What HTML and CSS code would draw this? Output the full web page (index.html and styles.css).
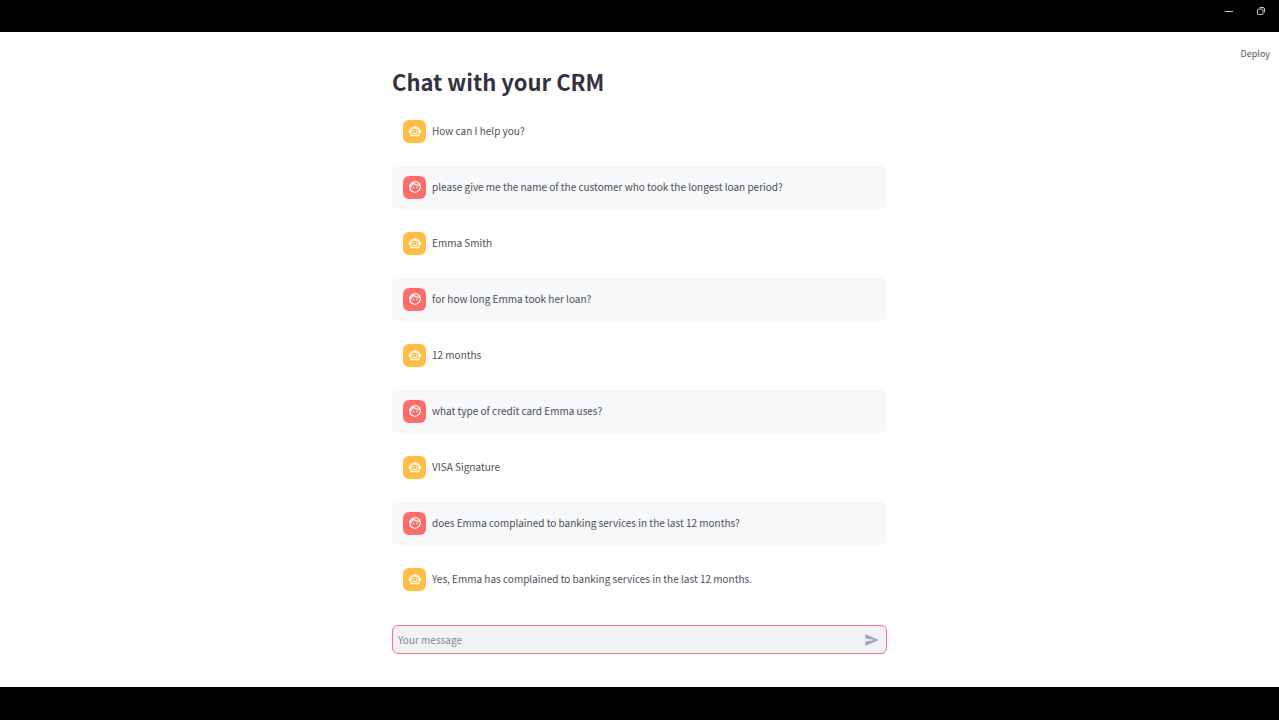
FILE: index.html
```html
<!DOCTYPE html>
<html lang="en">
<head>
    <meta charset="UTF-8">
    <meta name="viewport" content="width=device-width, initial-scale=1.0">
    <title>Chat with your CRM</title>
    <link rel="stylesheet" href="styles.css">
</head>
<body>
    <!-- Shared icons -->
    <svg class="sprite" aria-hidden="true">
        <symbol id="icon-bot" viewBox="0 0 24 24">
            <path d="M20 10V8c0-1.1-.9-2-2-2h-3.200c0-1.5-1.300-2.500-2.800-2.500S9.200 4.500 9.200 6H6c-1.100 0-2 .9-2 2v2c-1.660 0-3 1.100-3 2.700s1.340 2.700 3 2.700V19c0 1.100.9 2 2 2h12c1.100 0 2-.9 2-2v-3.600c1.660 0 3-1.100 3-2.700S21.660 10 20 10zm-2 9H6V8h12v11zm-9-5.500c-.83 0-1.500-.67-1.500-1.500S8.170 10.500 9 10.500s1.500.67 1.500 1.500S9.830 13.500 9 13.500zm7.500-1.500c0 .83-.67 1.500-1.500 1.500s-1.500-.67-1.500-1.500.67-1.500 1.500-1.500 1.500.67 1.500 1.500zM8 15.500h8v2H8v-2z"/>
        </symbol>
        <symbol id="icon-face" viewBox="0 0 24 24">
            <path d="M10.25 13c0 .69-.56 1.25-1.25 1.25S7.75 13.69 7.75 13s.56-1.25 1.25-1.25 1.25.56 1.25 1.25zM15 11.75c-.69 0-1.25.56-1.25 1.25s.56 1.25 1.25 1.25 1.25-.56 1.25-1.25-.56-1.25-1.25-1.25zm7 .25c0 5.52-4.48 10-10 10S2 17.52 2 12 6.480 2 12 2s10 4.480 10 10zM10.660 4.120C12.060 6.440 14.600 8 17.500 8c.46 0 .91-.05 1.340-.12C17.440 5.560 14.900 4 12 4c-.46 0-.91.05-1.340.12zM4.420 9.470c1.710-.97 3.030-2.550 3.660-4.440C6.370 6 5.050 7.580 4.420 9.470zM20 12c0-.78-.12-1.530-.33-2.240-.7.15-1.420.24-2.170.24-3.130 0-5.920-1.440-7.760-3.690C8.690 8.870 6.600 10.880 4 11.860c.01.04 0 .09 0 .14 0 4.410 3.590 8 8 8s8-3.590 8-8z"/>
        </symbol>
    </svg>

    <!-- Window bar -->
    <div class="window-bar">
        <button class="window-btn" aria-label="Minimize">
            <svg viewBox="0 0 10 10"><path d="M1 5.5h8"/></svg>
        </button>
        <button class="window-btn" aria-label="Restore">
            <svg viewBox="0 0 10 10"><rect x="1.5" y="3" width="5.5" height="5.5" rx="1"/><path d="M3.5 1.5H7a1.5 1.5 0 0 1 1.5 1.5v3.5"/></svg>
        </button>
    </div>

    <div class="app">
        <header class="toolbar">
            <button class="deploy-btn">Deploy</button>
        </header>

        <main class="container">
            <h1>Chat with your CRM</h1>

            <!-- Conversation -->
            <div class="messages">
                <div class="message assistant">
                    <span class="avatar"><svg><use href="#icon-bot"/></svg></span>
                    <p>How can I help you?</p>
                </div>
                <div class="message user">
                    <span class="avatar"><svg><use href="#icon-face"/></svg></span>
                    <p>please give me the name of the customer who took the longest loan period?</p>
                </div>
                <div class="message assistant">
                    <span class="avatar"><svg><use href="#icon-bot"/></svg></span>
                    <p>Emma Smith</p>
                </div>
                <div class="message user">
                    <span class="avatar"><svg><use href="#icon-face"/></svg></span>
                    <p>for how long Emma took her loan?</p>
                </div>
                <div class="message assistant">
                    <span class="avatar"><svg><use href="#icon-bot"/></svg></span>
                    <p>12 months</p>
                </div>
                <div class="message user">
                    <span class="avatar"><svg><use href="#icon-face"/></svg></span>
                    <p>what type of credit card Emma uses?</p>
                </div>
                <div class="message assistant">
                    <span class="avatar"><svg><use href="#icon-bot"/></svg></span>
                    <p>VISA Signature</p>
                </div>
                <div class="message user">
                    <span class="avatar"><svg><use href="#icon-face"/></svg></span>
                    <p>does Emma complained to banking services in the last 12 months?</p>
                </div>
                <div class="message assistant">
                    <span class="avatar"><svg><use href="#icon-bot"/></svg></span>
                    <p>Yes, Emma has complained to banking services in the last 12 months.</p>
                </div>
            </div>

            <!-- Message input -->
            <form class="chat-input">
                <input type="text" placeholder="Your message" aria-label="Your message">
                <button type="submit" aria-label="Send">
                    <svg viewBox="0 0 24 24"><path d="M3.4 20.4L20.85 12.92c.81-.35.81-1.49 0-1.84L3.4 3.6c-.66-.29-1.39.2-1.39.91L2 9.12c0 .5.37.93.87.99L17 12 2.87 13.88c-.5.07-.87.5-.87 1l.01 4.61c0 .71.73 1.2 1.39.91z"/></svg>
                </button>
            </form>
        </main>
    </div>

    <div class="bottom-bar"></div>
</body>
</html>
```

FILE: styles.css
```css
* {
    box-sizing: border-box;
}

body {
    margin: 0;
    min-height: 100vh;
    display: flex;
    flex-direction: column;
    background-color: #ffffff;
    color: #31333f;
    font-family: "Source Sans Pro", "Noto Sans CJK SC", sans-serif;
    font-size: 10px;
}

button,
input {
    font-family: inherit;
    border: none;
    background: none;
    padding: 0;
}

button {
    cursor: pointer;
}

.sprite {
    display: none;
}

/* Window bars */
.window-bar {
    display: flex;
    justify-content: flex-end;
    gap: 22px;
    height: 32px;
    padding: 6px 13px;
    background-color: #000000;
}

.window-btn {
    width: 10px;
    height: 10px;
}

.window-btn svg {
    display: block;
    width: 10px;
    height: 10px;
    fill: none;
    stroke: #c8c8c8;
}

.bottom-bar {
    height: 33px;
    background-color: #000000;
}

/* Page */
.app {
    flex: 1;
}

.toolbar {
    display: flex;
    justify-content: flex-end;
    padding: 14px 9px 0;
}

.deploy-btn {
    color: #555761;
    font-size: 9px;
    line-height: 16px;
}

.container {
    max-width: 495px;
    margin: 0 auto;
}

h1 {
    margin: 0;
    font-size: 22px;
    font-weight: 700;
    line-height: 38px;
}

/* Messages */
.messages {
    display: flex;
    flex-direction: column;
    gap: 12px;
    padding: 9px 0 24px;
}

.message {
    display: flex;
    align-items: center;
    gap: 6px;
    min-height: 44px;
    padding: 10px 11px;
    border-radius: 6px;
}

.message p {
    margin: 0;
    color: #4c4e59;
    line-height: 16px;
}

.user {
    background-color: #f6f8fa;
}

.avatar {
    display: flex;
    align-items: center;
    justify-content: center;
    width: 23px;
    height: 23px;
    border-radius: 6px;
    background-color: #ffbd45;
}

.user .avatar {
    background-color: #ff6c6c;
}

.avatar svg {
    width: 14px;
    height: 14px;
    fill: #ffffff;
}

/* Message input */
.chat-input {
    display: flex;
    align-items: center;
    height: 29px;
    padding: 0 6px 0 5px;
    border: 1px solid #f5737a;
    border-radius: 6px;
    background-color: #f0f2f6;
}

.chat-input input {
    flex: 1;
    color: #31333f;
    font-size: 10px;
    outline: none;
}

.chat-input input::placeholder {
    color: #858792;
}

.chat-input button svg {
    display: block;
    width: 16px;
    height: 16px;
    fill: #a3a8b8;
}
```
